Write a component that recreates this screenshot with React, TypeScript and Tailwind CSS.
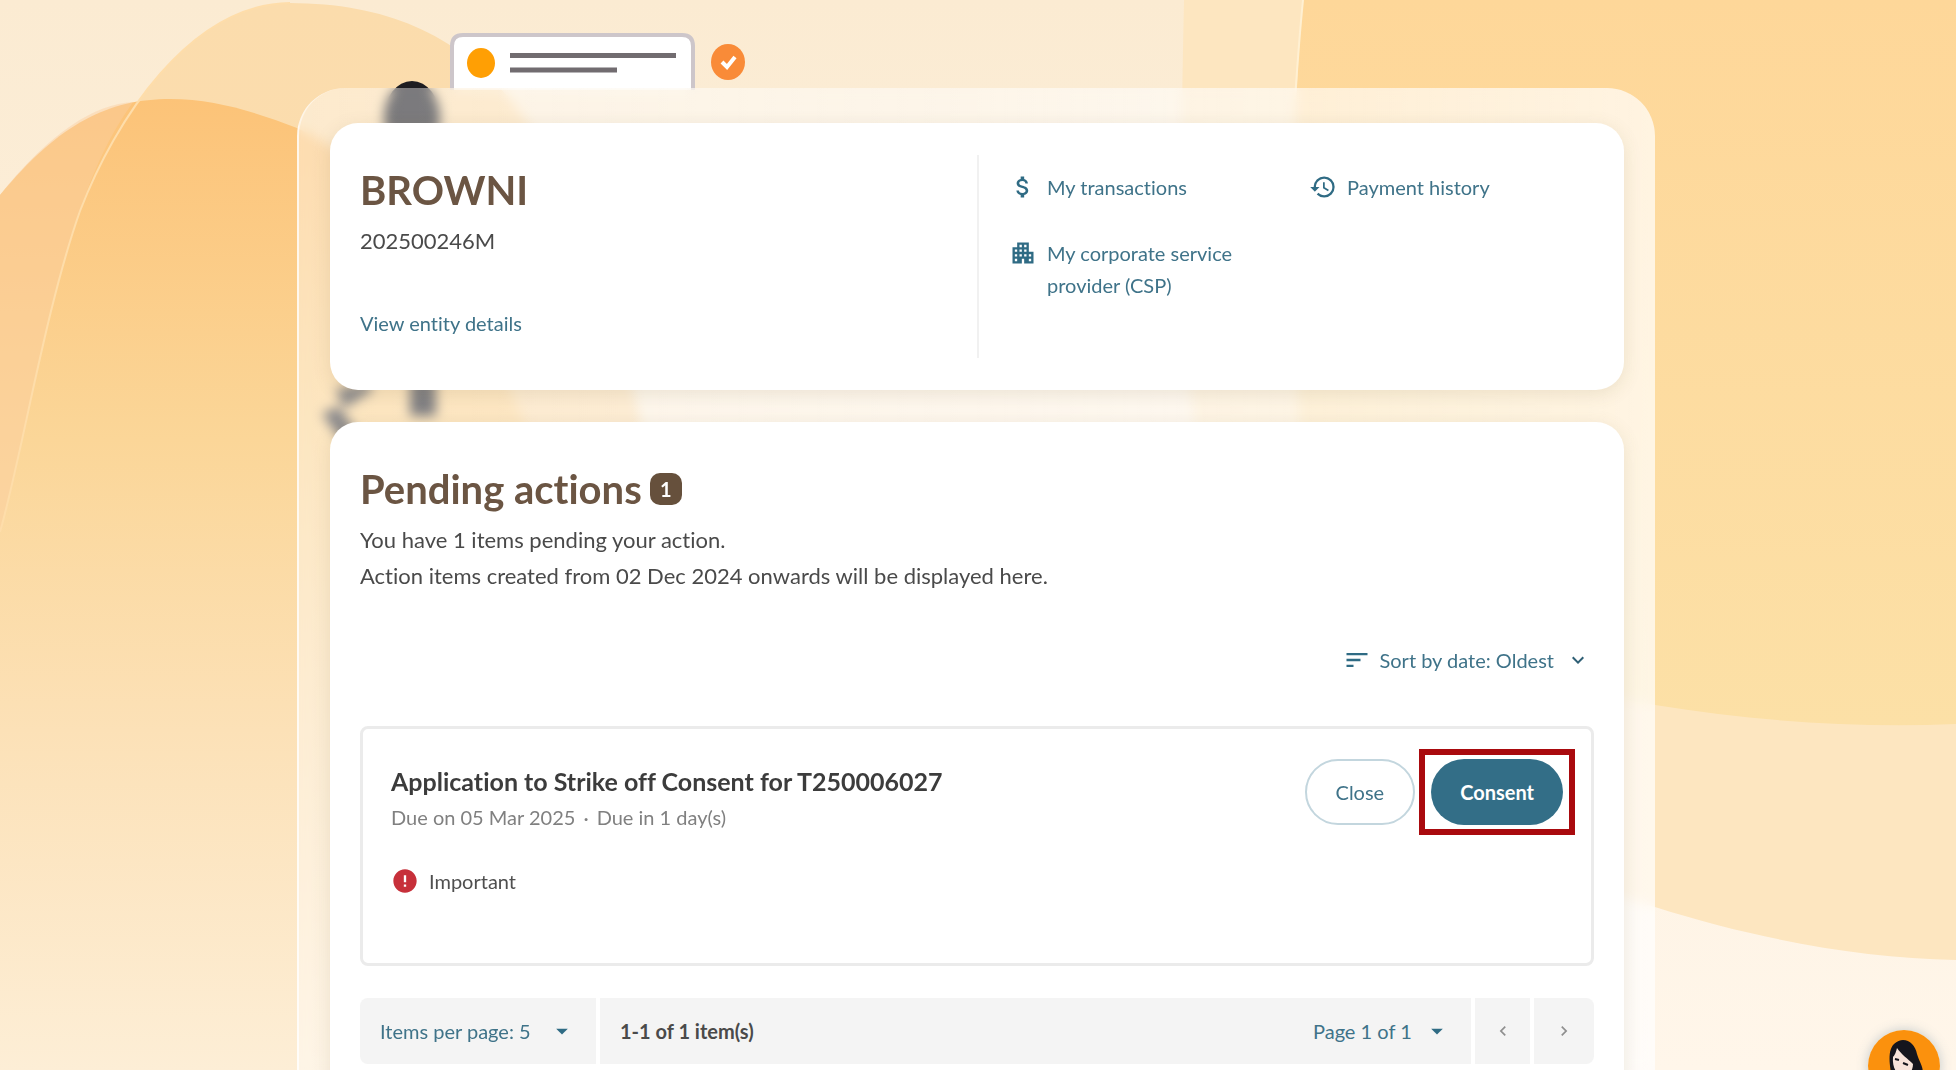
import React, { useState } from 'react';
import {
  MdApartment,
  MdArrowDropDown,
  MdAttachMoney,
  MdChevronLeft,
  MdChevronRight,
  MdError,
  MdHistory,
  MdKeyboardArrowDown,
  MdSort,
} from 'react-icons/md';

const pendingItems = [
  {
    id: 'T250006027',
    title: 'Application to Strike off Consent for T250006027',
    due: 'Due on 05 Mar 2025',
    remaining: 'Due in 1 day(s)',
    flag: 'Important',
  },
];

const Backdrop = () => (
  <svg
    className="absolute inset-x-0 top-0 h-screen w-full"
    viewBox="0 0 1956 1070"
    preserveAspectRatio="xMidYMin slice"
    aria-hidden="true"
  >
    <defs>
      <linearGradient id="base" x1="0" y1="0" x2="0" y2="1">
        <stop offset="0" stopColor="#fbebd2" />
        <stop offset="1" stopColor="#fff6ea" />
      </linearGradient>
      <linearGradient id="backHill" x1="0" y1="0" x2="0" y2="1">
        <stop offset="0" stopColor="#fbdcac" />
        <stop offset="0.5" stopColor="#fbdeb2" />
        <stop offset="1" stopColor="#fff3e2" />
      </linearGradient>
      <linearGradient id="frontHill" x1="0" y1="0" x2="0" y2="1">
        <stop offset="0" stopColor="#fcc378" />
        <stop offset="0.35" stopColor="#fbd698" />
        <stop offset="0.65" stopColor="#fce1b7" />
        <stop offset="1" stopColor="#fdeed6" />
      </linearGradient>
      <linearGradient id="rightWave" x1="0" y1="0" x2="0" y2="1">
        <stop offset="0" stopColor="#fed799" />
        <stop offset="1" stopColor="#fce0a6" />
      </linearGradient>
    </defs>
    <rect width="1956" height="1070" fill="url(#base)" />

    {/* Right side waves */}
    <path d="M1184 0C1180 200 1178 330 1200 460C1260 700 1440 850 1655 907C1760 940 1860 958 1956 960V0Z" fill="#fde6c0" />
    <path d="M1303 0C1294 90 1290 260 1300 430C1350 600 1480 680 1655 705C1760 722 1860 728 1956 724V0Z" fill="url(#rightWave)" />
    <path d="M1303 0C1299 40 1297 70 1295 100" fill="none" stroke="#fff0d2" strokeWidth="2" />

    {/* Left side hills */}
    <path d="M0 532C22 455 45 310 80 211C115 120 190 4 290 3C480 4 570 120 640 420V1070H0Z" fill="url(#backHill)" />
    <path d="M0 195C60 122 110 99 170 99C215 99 255 112 297 128C390 170 480 280 560 520V1070H0Z" fill="url(#frontHill)" />
    <path d="M0 195C50 132 95 104 133 102C112 132 95 165 80 211C45 310 22 455 0 532Z" fill="#fbcfa0" fillOpacity="0.45" />
    <path d="M0 532C22 455 45 310 80 211C115 120 190 4 290 3" fill="none" stroke="#feddaa" strokeWidth="2" />

    {/* Form illustration */}
    <path d="M452 90V46Q452 35 463 35H682Q693 35 693 46V90" fill="#fff" stroke="#cdc6ca" strokeWidth="4" />
    <ellipse cx="481" cy="63" rx="14" ry="15" fill="#ff9f04" />
    <path d="M510 55.500H676" stroke="#716c70" strokeWidth="5" />
    <path d="M510 70H617" stroke="#716c70" strokeWidth="5" />
    <ellipse cx="728" cy="62" rx="17" ry="18" fill="#f98b38" />
    <path d="M722 62l5 5 8-10" fill="none" stroke="#fff" strokeWidth="4" />

    {/* Figure behind the glass panel */}
    <ellipse cx="412" cy="118" rx="28" ry="37" fill="#1e1d21" />
    <path d="M410 370h26v46h-26z" fill="#26252a" />
    <path d="M335 390l34-8 4 8-28 18z" fill="#3b3a3e" />
    <path d="M322 414l16-8 18 24-12 14z" fill="#3b3a3e" />
  </svg>
);

type QuickLinkProps = {
  icon: React.ReactNode;
  label: string;
};

const QuickLink = ({ icon, label }: QuickLinkProps) => (
  <a href="#" className="flex items-start gap-3 text-xl leading-8 text-[#3f7389]">
    <span className="flex h-8 w-6 shrink-0 items-center justify-center text-[28px] text-[#2f6b84] [&>svg]:shrink-0">
      {icon}
    </span>
    <span>{label}</span>
  </a>
);

const EntityCard = () => (
  <section className="flex min-h-[267px] items-stretch rounded-[28px] bg-white px-[30px] py-8 shadow-[0_4px_18px_rgba(120,100,60,0.14)]">
    <div className="flex w-1/2 flex-col items-start pt-2">
      <h1 className="text-[40px] leading-[54px] font-bold text-[#6b5543]">BROWNI</h1>
      <p className="pt-[6px] text-[22px] leading-9 text-[#4a4a4a]">202500246M</p>
      <a href="#" className="mt-12 text-xl leading-8 text-[#3f7389]">
        View entity details
      </a>
    </div>
    <div className="w-1/2 border-l-2 border-[#f1f1f1] pt-4 pl-8">
      <div className="grid grid-cols-[300px_1fr] items-start gap-y-[34px]">
        <QuickLink icon={<MdAttachMoney />} label="My transactions" />
        <QuickLink icon={<MdHistory />} label="Payment history" />
        <div className="max-w-[240px]">
          <QuickLink icon={<MdApartment />} label="My corporate service provider (CSP)" />
        </div>
      </div>
    </div>
  </section>
);

const PendingItem = ({ item }: { item: (typeof pendingItems)[number] }) => (
  <article className="flex min-h-[240px] items-start justify-between rounded-lg border-[3px] border-[#ebebeb] px-7 py-[30px]">
    <div className="pt-1">
      <h3 className="text-[25px] leading-9 font-bold text-[#3c3c3c]">{item.title}</h3>
      <p className="flex gap-2 text-xl leading-9 text-[#808080]">
        <span>{item.due}</span>
        <span>·</span>
        <span>{item.remaining}</span>
      </p>
      <p className="mt-7 flex items-center gap-[10px] text-xl leading-9 text-[#4f4f4f]">
        <MdError className="size-7 text-[#c7303a]" />
        {item.flag}
      </p>
    </div>
    <div className="flex items-center gap-4">
      <button type="button" className="h-[66px] rounded-full border-2 border-[#c3d6de] bg-white px-[29px] text-xl text-[#3f7389]">
        Close
      </button>
      <div className="relative">
        <button type="button" className="h-[66px] rounded-full bg-[#336e87] px-[29px] text-xl font-bold text-white">
          Consent
        </button>
        <span className="pointer-events-none absolute -inset-x-3 -inset-y-[10px] border-[6px] border-[#a90a0e]" />
      </div>
    </div>
  </article>
);

const Pagination = () => (
  <nav aria-label="Pagination" className="mt-8 flex h-[66px] gap-1 overflow-hidden rounded-lg text-xl">
    <div className="relative flex w-[236px] items-center bg-[#f4f4f4]">
      <select aria-label="Items per page" className="h-full w-full appearance-none pl-5 text-[#3f7389]">
        <option>Items per page: 5</option>
      </select>
      <MdArrowDropDown className="pointer-events-none absolute right-5 size-7 text-[#2f6b84]" />
    </div>
    <div className="flex flex-1 items-center justify-between bg-[#f4f4f4] pl-5">
      <p className="font-bold text-[#4a4a4a]">1-1 of 1 item(s)</p>
      <div className="relative flex h-full w-[158px] items-center">
        <select aria-label="Page" className="h-full w-full appearance-none text-[#3f7389]">
          <option>Page 1 of 1</option>
        </select>
        <MdArrowDropDown className="pointer-events-none absolute right-5 size-7 text-[#2f6b84]" />
      </div>
    </div>
    <button type="button" aria-label="Previous page" className="flex w-[55px] items-center justify-center bg-[#f4f4f4] text-[#8f8f8f]">
      <MdChevronLeft />
    </button>
    <button type="button" aria-label="Next page" className="flex w-[60px] items-center justify-center bg-[#f4f4f4] text-[#8f8f8f]">
      <MdChevronRight />
    </button>
  </nav>
);

const PendingActions = ({ onSort }: { onSort: (value: string) => void }) => (
  <section className="mt-8 rounded-[28px] bg-white px-[30px] pt-10 pb-12 shadow-[0_4px_18px_rgba(120,100,60,0.14)]">
    <h2 className="flex items-center gap-2 text-[40px] leading-[54px] font-bold text-[#6b5543]">
      Pending actions
      <span className="flex h-8 w-8 items-center justify-center rounded-[10px] bg-[#66503c] text-xl text-white">
        {pendingItems.length}
      </span>
    </h2>
    <p className="pt-[6px] text-[22px] leading-9 text-[#4a4a4a]">
      You have 1 items pending your action.
      <br />
      Action items created from 02 Dec 2024 onwards will be displayed here.
    </p>

    <div className="mt-12 flex h-9 items-center justify-end pr-1 text-xl text-[#3f7389]">
      <MdSort className="mr-2 size-7 text-[#2f6b84]" />
      <div className="relative flex items-center">
        <select
          aria-label="Sort pending actions"
          onChange={(e) => onSort(e.target.value)}
          className="field-sizing-content appearance-none pr-9"
        >
          <option>Sort by date: Oldest</option>
          <option>Sort by date: Newest</option>
        </select>
        <MdKeyboardArrowDown className="pointer-events-none absolute right-0 size-6 text-[#2f5f75]" />
      </div>
    </div>

    <div className="mt-12">
      {pendingItems.map((item) => (
        <PendingItem key={item.id} item={item} />
      ))}
    </div>

    <Pagination />
  </section>
);

const ChatButton = () => (
  <button
    type="button"
    aria-label="Open chat assistant"
    className="fixed right-4 -bottom-8 size-[72px] overflow-hidden rounded-full shadow-[0_0_12px_rgba(80,120,150,0.35)]"
  >
    <svg viewBox="0 0 72 72" className="size-full" aria-hidden="true">
      <rect width="72" height="72" fill="#fb910d" />
      <path d="M24 50C23 40 18 22 26 14C36 5 47 13 49 24C51 31 55 36 55 43L50 52H24Z" fill="#15151d" />
      <path d="M25 27C27 25 28 22 29 18C33 24 40 29 45 34C45 41 40 48 36 47C29 45 24 38 25 27Z" fill="#f7e3da" />
      <path d="M27 29l4 1M35 33l5 2" stroke="#15151d" strokeWidth="2" />
    </svg>
  </button>
);

const App = () => {
  const [, setSort] = useState('Sort by date: Oldest');

  return (
    <div className="relative min-h-screen overflow-hidden bg-[#fff6ea] pr-1 font-['Lato',sans-serif] [font-variant-ligatures:none]">
      <Backdrop />
      <main className="relative mx-auto mt-[88px] w-full max-w-[1358px] rounded-t-[48px] border-l-2 border-white/50 bg-linear-to-r from-white/40 via-white/50 to-white/70 px-[31px] pt-[35px] pb-10 backdrop-blur-[6px]">
        <EntityCard />
        <PendingActions onSort={setSort} />
      </main>
      <ChatButton />
    </div>
  );
};

export default App;
